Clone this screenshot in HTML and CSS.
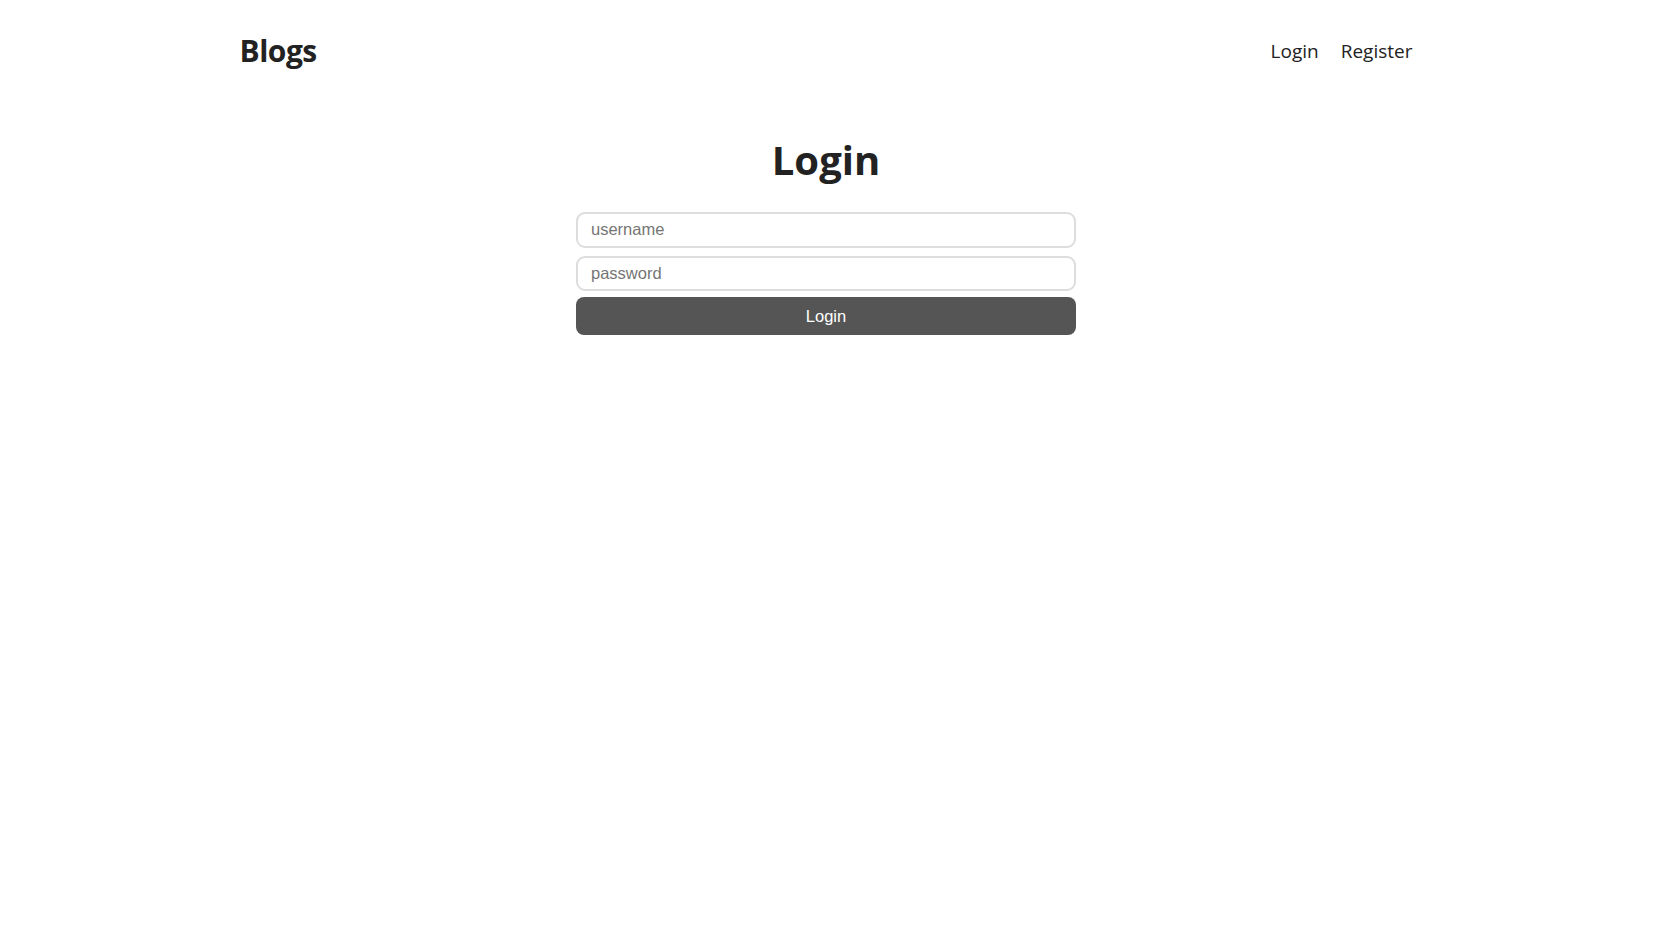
FILE: index.html
```html
<!DOCTYPE html>
<html lang="en">
<head>
<meta charset="utf-8">
<title>Blogs</title>
<link rel="stylesheet" href="styles.css">
</head>
<body>
<main class="page">
  <header class="site-header">
    <a class="logo" href="#">Blogs</a>
    <nav class="nav">
      <a href="#">Login</a>
      <a href="#">Register</a>
    </nav>
  </header>
  <form class="login">
    <h1 class="title">Login</h1>
    <input class="field" type="text" placeholder="username">
    <input class="field" type="password" placeholder="password">
    <button class="submit" type="button">Login</button>
  </form>
</main>
</body>
</html>
```

FILE: styles.css
```css
html, body {
  margin: 0;
  padding: 0;
  background: #fff;
}
body {
  padding-right: 9px;
  font-family: "Open Sans", "Noto Sans", sans-serif;
  color: #222;
}
.page {
  width: 1173px;
  margin: 0 auto;
}
.site-header {
  display: flex;
  justify-content: space-between;
  align-items: center;
  height: 40px;
  margin-top: 31px;
}
.logo {
  font-size: 30px;
  font-weight: 700;
  line-height: 40px;
  color: #222;
  text-decoration: none;
  letter-spacing: -0.5px;
}
.nav {
  display: flex;
  gap: 22px;
}
.nav a {
  font-size: 19px;
  line-height: 40px;
  color: #222;
  text-decoration: none;
}
.login {
  width: 500px;
  margin: 0 auto;
  display: flex;
  flex-direction: column;
}
.title {
  margin: 65px 0 28px;
  font-size: 40px;
  line-height: 48px;
  font-weight: 700;
  text-align: center;
  color: #222;
}
.field {
  box-sizing: border-box;
  height: 35.5px;
  margin: 0 0 8px;
  padding: 0 13px;
  border: 2px solid #ddd;
  border-radius: 9px;
  background: #fff;
  font-family: "Liberation Sans", Arial, sans-serif;
  font-size: 16.5px;
  color: #222;
  outline: none;
}
.field + .field {
  margin-bottom: 6px;
}
.field::placeholder {
  color: #757575;
}
.submit {
  height: 38px;
  border: 0;
  border-radius: 8px;
  background: #555;
  color: #fff;
  font-family: "Liberation Sans", Arial, sans-serif;
  font-size: 16.5px;
  padding: 0;
}
```
